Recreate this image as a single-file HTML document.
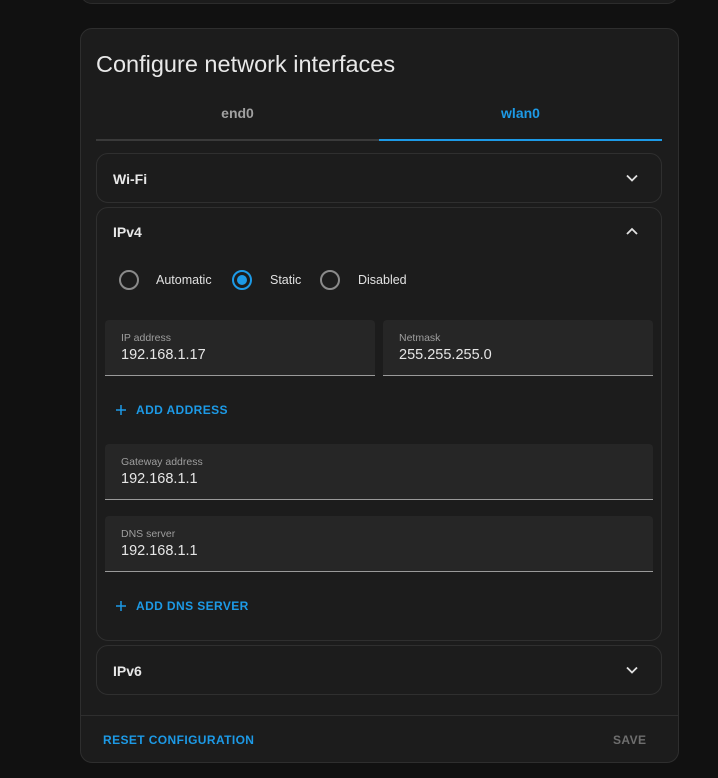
<!DOCTYPE html>
<html><head><style>
*{box-sizing:border-box;margin:0;padding:0}
body{width:718px;height:778px;background:#111111;font-family:"Liberation Sans",sans-serif;position:relative;overflow:hidden;color:#e1e1e1}
.abs{position:absolute}
.prev{left:80px;top:-20px;width:599px;height:24px;border:1px solid #2c2c2c;border-radius:12px;background:#1c1c1c}
.card{left:80px;top:28px;width:599px;height:735px;border:1px solid #2e2e2e;border-radius:12px;background:#1c1c1c}
.title{left:96px;top:51px;font-size:23.5px;color:#e8e8e8}
.tab{top:105px;font-size:14px;font-weight:bold;text-align:center;width:283px}
.panel{left:96px;width:566px;border:1px solid #2f2f2f;border-radius:12px}
.ph{left:16px;font-size:14px;font-weight:bold;color:#e8e8e8}
.field{background:#262626;border-bottom:1px solid #9a9a9a;border-radius:4px 4px 0 0}
.lbl{position:absolute;left:16px;top:12px;font-size:10.5px;color:#9e9e9e}
.val{position:absolute;left:16px;top:27px;font-size:14.5px;color:#e6e6e6}
.btn{font-size:12px;font-weight:bold;letter-spacing:0.4px;color:#1d9ae6}
.radio{width:20px;height:20px;border:2px solid #8a8a8a;border-radius:50%}
.rl{font-size:12.5px;color:#e1e1e1;top:273px}
</style></head><body>
<div class="abs prev"></div>
<div class="abs card"></div>
<div class="abs title">Configure network interfaces</div>
<div class="abs tab" style="left:96px;color:#a0a0a0">end0</div>
<div class="abs tab" style="left:379px;color:#1d9ae6">wlan0</div>
<div class="abs" style="left:96px;top:139px;width:566px;height:2px;background:#3a3a3a"></div>
<div class="abs" style="left:379px;top:139px;width:283px;height:2px;background:#1d9ae6"></div>

<div class="abs panel" style="top:153px;height:50px"></div>
<div class="abs ph" style="left:113px;top:171px">Wi-Fi</div>
<svg class="abs" style="left:624px;top:170px" width="16" height="16" viewBox="0 0 16 16"><path d="M3 5.5l5 5 5-5" stroke="#e1e1e1" stroke-width="1.8" fill="none"/></svg>

<div class="abs panel" style="top:207px;height:434px"></div>
<div class="abs ph" style="left:113px;top:224px">IPv4</div>
<svg class="abs" style="left:624px;top:223px" width="16" height="16" viewBox="0 0 16 16"><path d="M3 11l5-5 5 5" stroke="#e1e1e1" stroke-width="1.8" fill="none"/></svg>

<div class="abs radio" style="left:119px;top:270px"></div>
<div class="abs rl" style="left:156px">Automatic</div>
<div class="abs radio" style="left:232px;top:270px;border-color:#1d9ae6"><div style="position:absolute;left:3px;top:3px;width:10px;height:10px;border-radius:50%;background:#1d9ae6"></div></div>
<div class="abs rl" style="left:270px">Static</div>
<div class="abs radio" style="left:320px;top:270px"></div>
<div class="abs rl" style="left:358px">Disabled</div>

<div class="abs field" style="left:105px;top:320px;width:270px;height:56px"><div class="lbl">IP address</div><div class="val">192.168.1.17</div></div>
<div class="abs field" style="left:383px;top:320px;width:270px;height:56px"><div class="lbl">Netmask</div><div class="val">255.255.255.0</div></div>

<svg class="abs" style="left:115px;top:404px" width="12" height="12" viewBox="0 0 12 12"><path d="M6 1v10M1 6h10" stroke="#1d9ae6" stroke-width="1.5"/></svg>
<div class="abs btn" style="left:136px;top:403px">ADD ADDRESS</div>

<div class="abs field" style="left:105px;top:444px;width:548px;height:56px"><div class="lbl">Gateway address</div><div class="val">192.168.1.1</div></div>
<div class="abs field" style="left:105px;top:516px;width:548px;height:56px"><div class="lbl">DNS server</div><div class="val">192.168.1.1</div></div>

<svg class="abs" style="left:115px;top:600px" width="12" height="12" viewBox="0 0 12 12"><path d="M6 1v10M1 6h10" stroke="#1d9ae6" stroke-width="1.5"/></svg>
<div class="abs btn" style="left:136px;top:599px">ADD DNS SERVER</div>

<div class="abs panel" style="top:645px;height:50px"></div>
<div class="abs ph" style="left:113px;top:663px">IPv6</div>
<svg class="abs" style="left:624px;top:662px" width="16" height="16" viewBox="0 0 16 16"><path d="M3 5.5l5 5 5-5" stroke="#e1e1e1" stroke-width="1.8" fill="none"/></svg>

<div class="abs" style="left:81px;top:715px;width:597px;height:1px;background:#2e2e2e"></div>
<div class="abs btn" style="left:103px;top:733px">RESET CONFIGURATION</div>
<div class="abs btn" style="left:613px;top:733px;color:#6e6e6e">SAVE</div>
</body></html>
